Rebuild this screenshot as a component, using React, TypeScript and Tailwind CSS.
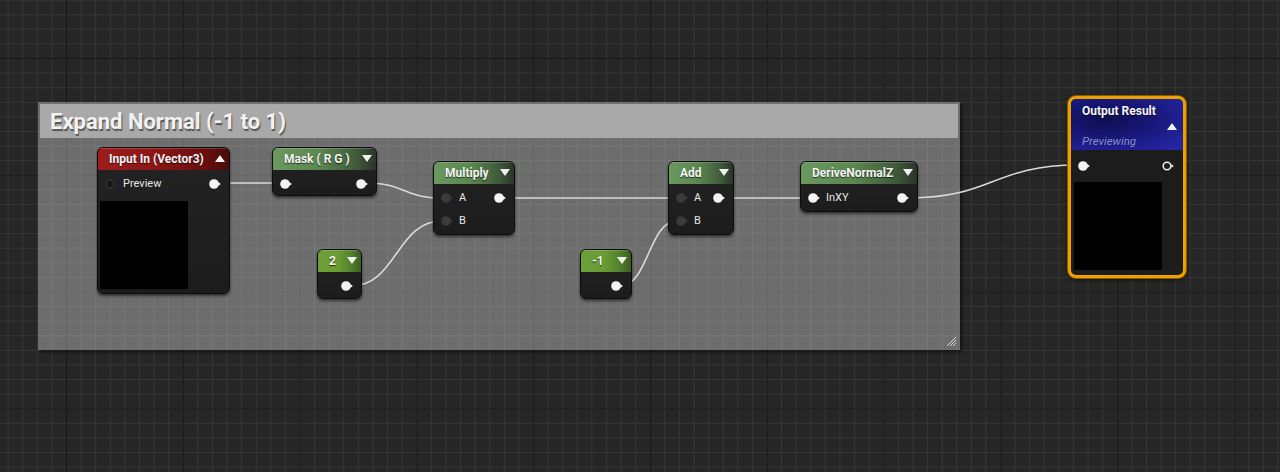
import React from 'react';

type Tone = 'red' | 'green' | 'lime';

const headerTone: Record<Tone, string> = {
  red: 'bg-[linear-gradient(to_right,#9e1d1d_0%,#8a1616_45%,#6a0f0f_80%,#4a0b0b_100%)]',
  green: 'bg-[linear-gradient(to_right,#6a985f_0%,#5b874f_45%,#405c3b_80%,#2a3528_100%)]',
  lime: 'bg-[linear-gradient(to_right,#6c9f37_0%,#6a9d35_45%,#54832c_75%,#3b5c22_100%)]',
};

// pin glyph: circle with a small arrow on the right
const Pin: React.FC<{ kind?: 'on' | 'off' | 'ring' | 'hollow' }> = ({ kind = 'on' }) => {
  if (kind === 'hollow') {
    return (
      <svg width="12" height="10" viewBox="0 0 12 10" className="shrink-0">
        <circle cx="5" cy="5" r="3.8" fill="#1c1c1c" stroke="#f2f2f2" strokeWidth="1.5" />
        <polygon points="9.4,3.2 11.8,5 9.4,6.8" fill="#f2f2f2" />
      </svg>
    );
  }
  if (kind === 'ring') {
    return (
      <svg width="12" height="10" viewBox="0 0 12 10" className="shrink-0">
        <circle cx="5" cy="5" r="4" fill="#161616" stroke="#383838" strokeWidth="1.2" />
        <polygon points="9.4,3.6 11.2,5 9.4,6.4" fill="#2e2e2e" />
      </svg>
    );
  }
  const c = kind === 'on' ? '#f4f4f4' : '#3b3b3b';
  return (
    <svg width="12" height="10" viewBox="0 0 12 10" className="shrink-0">
      <circle cx="5" cy="5" r="4.8" fill={c} />
      <polygon points="9.2,3 11.9,5 9.2,7" fill={c} />
    </svg>
  );
};

const Tri: React.FC<{ up?: boolean }> = ({ up }) => (
  <svg width="10" height="7" viewBox="0 0 10 7" className="shrink-0">
    {up ? <polygon points="0,7 5,0 10,7" fill="#f0f0f0" /> : <polygon points="0,0 10,0 5,7" fill="#f0f0f0" />}
  </svg>
);

const Node: React.FC<{ pos: string; tone: Tone; title: string; up?: boolean; children?: React.ReactNode }> = ({
  pos,
  tone,
  title,
  up,
  children,
}) => (
  <div
    className={`absolute overflow-hidden rounded-[6px] border border-[#0c0c0c] bg-[linear-gradient(to_bottom,#232323,#1c1c1c)] shadow-[0_2px_3px_rgba(0,0,0,0.55)] ${pos}`}
  >
    <div
      className={`flex h-[22px] items-center justify-between pl-[11px] pr-[4px] shadow-[inset_0_1px_0_rgba(255,255,255,0.18)] ${headerTone[tone]}`}
    >
      <span className="text-[12px] font-bold leading-none text-[#f4f4f4] [text-shadow:0_1px_1px_rgba(0,0,0,0.7)]">
        {title}
      </span>
      <span className="-mt-[2px]">
        <Tri up={up} />
      </span>
    </div>
    <div className="pt-[2px]">{children}</div>
  </div>
);

const Row: React.FC<{ input?: 'on' | 'off' | 'ring'; label?: string; output?: boolean }> = ({ input, label, output }) => (
  <div className="flex h-[23px] items-center justify-between pl-[7px] pr-[8px]">
    <div className="flex items-center gap-[6px]">
      {input ? <Pin kind={input} /> : null}
      {label ? <span className="text-[11px] leading-none text-[#e6e6e6]">{label}</span> : null}
    </div>
    {output ? <Pin kind="on" /> : null}
  </div>
);

const wire = (x1: number, y1: number, x2: number, y2: number) => {
  const d = Math.max((x2 - x1) * 0.5, 24);
  return `M${x1} ${y1} C${x1 + d} ${y1}, ${x2 - d} ${y2}, ${x2} ${y2}`;
};

const wires = [
  [220, 183, 281, 183],
  [366, 183, 442, 198],
  [351, 286, 442, 221],
  [504, 198, 677, 198],
  [620, 286, 677, 221],
  [723, 198, 808, 198],
  [908, 198, 1078, 165],
];

export default function App() {
  return (
    <div className="relative h-[472px] w-[1280px] overflow-hidden bg-[#262626] bg-[image:linear-gradient(to_right,#171717_1px,transparent_1px),linear-gradient(to_bottom,#171717_1px,transparent_1px),linear-gradient(to_right,#363636_1px,transparent_1px),linear-gradient(to_bottom,#363636_1px,transparent_1px)] bg-[size:116.8px_116.8px,116.8px_116.8px,14.6px_14.6px,14.6px_14.6px] bg-[position:66px_58px,66px_58px,66px_58px,66px_58px] font-['Roboto',sans-serif]">
      {/* Comment box */}
      <div className="absolute left-[38px] top-[102px] flex h-[248px] w-[922px] flex-col bg-white/[0.33] p-[2px] shadow-[2px_2px_3px_rgba(0,0,0,0.55)]">
        <div className="flex h-[34px] items-center bg-[#a9a9a9] pl-[10px] pt-[2px]">
          <span className="text-[22px] font-bold leading-none text-[#f2f2f2] [text-shadow:1px_2px_1px_rgba(0,0,0,0.5)]">
            Expand Normal (-1 to 1)
          </span>
        </div>
        <div className="flex flex-1 items-end justify-end pb-[1px] pr-[1px]">
          <svg width="12" height="12" viewBox="0 0 12 12">
            <path d="M11 2 L2 11 M11 5 L5 11 M11 8 L8 11" stroke="#d8d8d8" strokeWidth="1" />
          </svg>
        </div>
      </div>

      {/* Wires */}
      <svg className="pointer-events-none absolute left-0 top-0" width="1280" height="472">
        {wires.map(([a, b, c, d], i) => (
          <path key={i} d={wire(a, b, c, d)} fill="none" stroke="#dadada" strokeWidth="1.6" />
        ))}
      </svg>

      <Node pos="left-[97px] top-[147px] w-[133px] h-[147px]" tone="red" title="Input In (Vector3)" up>
        <Row input="ring" label="Preview" output />
        <div className="ml-[2px] mt-[6px] h-[88px] w-[88px] bg-black" />
      </Node>

      <Node pos="left-[272px] top-[147px] w-[105px] h-[49px]" tone="green" title="Mask ( R G )">
        <Row input="on" output />
      </Node>

      <Node pos="left-[433px] top-[161px] w-[82px] h-[74px]" tone="green" title="Multiply">
        <Row input="off" label="A" output />
        <Row input="off" label="B" />
      </Node>

      <Node pos="left-[317px] top-[249px] w-[45px] h-[50px]" tone="lime" title="2">
        <Row output />
      </Node>

      <Node pos="left-[668px] top-[161px] w-[66px] h-[74px]" tone="green" title="Add">
        <Row input="off" label="A" output />
        <Row input="off" label="B" />
      </Node>

      <Node pos="left-[580px] top-[249px] w-[52px] h-[50px]" tone="lime" title="-1">
        <Row output />
      </Node>

      <Node pos="left-[800px] top-[161px] w-[118px] h-[51px]" tone="green" title="DeriveNormalZ">
        <Row input="on" label="InXY" output />
      </Node>

      {/* Output Result (selected) */}
      <div className="absolute left-[1068px] top-[96px] h-[182px] w-[118px] overflow-hidden rounded-[8px] border-[3px] border-[#eda100] bg-[#1c1c1c] shadow-[0_0_0_1px_#8a5a00,0_2px_4px_rgba(0,0,0,0.6)]">
        <div className="relative h-[51px] bg-[radial-gradient(ellipse_at_30%_40%,#0e0e52_0%,#18187a_45%,#2828ae_100%)] pl-[11px] pt-[5px]">
          <div className="text-[12px] font-bold leading-[14px] text-[#f4f4f4] [text-shadow:0_1px_1px_rgba(0,0,0,0.7)]">Output Result</div>
          <div className="flex justify-end pr-[6px] pt-[5px]">
            <Tri up />
          </div>
          <div className="pt-[4px] text-[11.5px] italic leading-[14px] text-[#8c8cc8]">Previewing</div>
        </div>
        <div className="mt-[4px] flex h-[23px] items-center justify-between pl-[7px] pr-[9px]">
          <Pin kind="on" />
          <Pin kind="hollow" />
        </div>
        <div className="ml-[3px] mt-[5px] h-[88px] w-[88px] bg-black" />
      </div>
    </div>
  );
}
